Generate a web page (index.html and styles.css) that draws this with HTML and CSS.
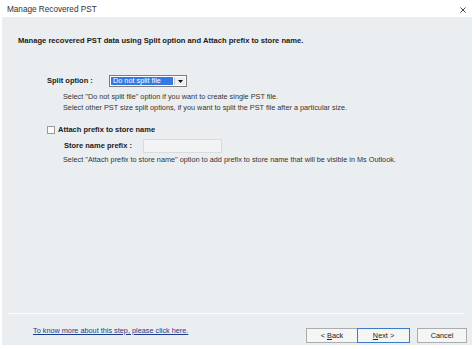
FILE: index.html
```html
<!DOCTYPE html>
<html>
<head>
<meta charset="utf-8">
<link rel="stylesheet" href="styles.css">
</head>
<body>
<div class="window">
  <div class="titlebar">
    <span class="title">Manage Recovered PST</span>
    <svg class="close" width="6" height="6" viewBox="0 0 6 6"><path d="M0.5 0.5 L5.5 5.5 M5.5 0.5 L0.5 5.5" stroke="#333" stroke-width="0.9" fill="none"/></svg>
  </div>
  <div class="panel">
    <div class="heading">Manage recovered PST data using Split option and Attach prefix to store name.</div>
    <div class="split-row">
      <span class="label split-label">Split option :</span>
      <div class="select">
        <span class="select-value">Do not split file</span>
        <span class="select-btn"><svg width="5" height="3" viewBox="0 0 5 3"><path d="M0 0 H5 L2.5 3 Z" fill="#111"/></svg></span>
      </div>
    </div>
    <div class="desc">
      <div>Select "Do not split file" option if you want to create single PST file.</div>
      <div>Select other PST size split options, if you want to split the PST file after a particular size.</div>
    </div>
    <div class="check-row">
      <span class="checkbox"></span>
      <span class="label">Attach prefix to store name</span>
    </div>
    <div class="prefix-row">
      <span class="label prefix-label">Store name prefix :</span>
      <span class="input"></span>
    </div>
    <div class="desc desc2">Select "Attach prefix to store name" option to add prefix to store name that will be visible in Ms Outlook.</div>
    <div class="spacer"></div>
    <div class="separator"></div>
    <div class="footer">
      <a class="link" href="#">To know more about this step, please click here.</a>
      <div class="buttons">
        <span class="btn btn-back"><span>&lt; <u>B</u>ack</span></span>
        <span class="btn btn-next"><span><u>N</u>ext &gt;</span></span>
        <span class="btn btn-cancel"><span>Cancel</span></span>
      </div>
    </div>
  </div>
</div>
</body>
</html>
```
FILE: styles.css
```css
* { box-sizing: border-box; }
html, body { margin: 0; padding: 0; background: #ffffff; }
body {
  width: 474px;
  height: 349px;
  overflow: hidden;
  font-family: "Liberation Sans", Arial, sans-serif;
  font-size: 7.3px;
  color: #222;
}
.window { width: 474px; height: 349px; display: flex; flex-direction: column; }
.titlebar {
  height: 17px;
  padding: 3px 8px 0 7px;
  display: flex;
  align-items: center;
  justify-content: space-between;
  background: #fff;
}
.title { font-size: 8.2px; color: #333; line-height: 14px; }
.close { display: block; }
.panel {
  margin: 0 2px;
  height: 328px;
  background: #ebeef0;
  display: flex;
  flex-direction: column;
}
.heading {
  margin-top: 19px;
  padding-left: 16px;
  line-height: 10px;
  font-weight: bold;
  font-size: 7.6px;
  color: #1a1a1a;
}
.label { font-weight: bold; font-size: 7.5px; color: #1a1a1a; line-height: 10px; }
.split-row {
  margin-top: 29px;
  height: 12px;
  padding-left: 45px;
  display: flex;
  align-items: center;
}
.split-label { width: 62px; }
.select {
  width: 78px;
  height: 12px;
  border: 1px solid #7d7d7d;
  background: #fff;
  display: flex;
  padding: 1px;
}
.select-value {
  flex: 1;
  background: #3478e6;
  color: #fff;
  line-height: 8px;
  padding-left: 2px;
  font-size: 7.3px;
}
.select-btn {
  width: 11px;
  margin-left: 1px;
  background: #eeeeee;
  border-left: 1px solid #c8c8c8;
  display: flex;
  align-items: center;
  justify-content: center;
}
.select-btn svg { display: block; }
.desc {
  margin-top: 4px;
  padding-left: 61px;
  line-height: 11px;
  color: #333;
}
.check-row {
  margin-top: 12px;
  height: 10px;
  padding-left: 45px;
  display: flex;
  align-items: center;
  gap: 3px;
}
.checkbox {
  width: 8px;
  height: 8px;
  border: 1px solid #9a9a9a;
  background: #fafafa;
}
.prefix-row {
  margin-top: 4px;
  height: 14px;
  padding-left: 62px;
  display: flex;
  align-items: center;
}
.prefix-label { width: 79px; }
.input {
  width: 79px;
  height: 14px;
  border: 1px solid #d9dcde;
  background: #f1f3f4;
}
.desc2 { margin-top: 1px; }
.spacer { flex: 1; }
.separator {
  margin: 0 8px 0 6px;
  height: 1px;
  background: #fbfcfc;
}
.footer {
  padding: 14px 5px 2px 31px;
  display: flex;
  justify-content: space-between;
  align-items: flex-start;
}
.link {
  margin-top: -2px;
  line-height: 10px;
  color: #1b3c8c;
  text-decoration: underline;
}
.buttons { display: flex; }
.btn {
  height: 15px;
  border: 1px solid #adadad;
  background: #f4f5f5;
  display: flex;
  align-items: center;
  justify-content: center;
  color: #222;
  line-height: 13px;
}
.btn u { text-decoration: underline; }
.btn-back { width: 52px; }
.btn-next { width: 53px; margin-left: -1px; border-color: #3d7bc4; }
.btn-cancel { width: 50px; margin-left: 7px; }
```
